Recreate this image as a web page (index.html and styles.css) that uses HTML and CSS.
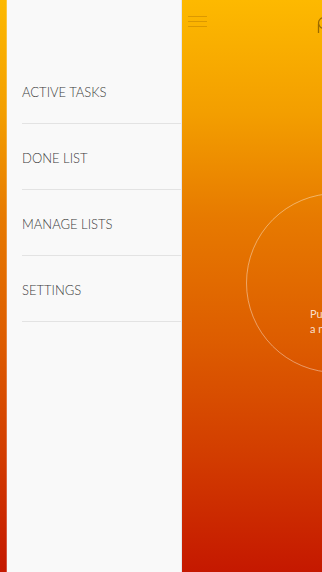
FILE: index.html
```html
<!DOCTYPE html>
<html lang="en">
  <head>
    <meta charset="UTF-8">
    <title>Tasks</title>
    <link rel="stylesheet" href="styles.css">
  </head>
  <body>
    <div class="edge"></div>
    <nav class="drawer">
      <ul class="menu">
        <li class="menu-item">ACTIVE TASKS</li>
        <li class="menu-item">DONE LIST</li>
        <li class="menu-item">MANAGE LISTS</li>
        <li class="menu-item">SETTINGS</li>
      </ul>
    </nav>
    <main class="main">
      <header class="topbar">
        <div class="burger">
          <span></span>
          <span></span>
          <span></span>
        </div>
        <svg class="search" width="14" height="20" viewBox="0 0 14 20">
          <circle cx="10" cy="7" r="5.5" fill="none" stroke="#9a6a00" stroke-width="1.3"/>
          <line x1="4.5" y1="8" x2="4.5" y2="17" stroke="#9a6a00" stroke-width="1.3"/>
        </svg>
      </header>
      <div class="circle">
        <p class="hint">Pull down to add<br>a new task</p>
      </div>
    </main>
  </body>
</html>
```

FILE: styles.css
```css
html, body {
  height: 100%;
}

body {
  margin: 0;
  display: flex;
  overflow: hidden;
  font-family: "Lato", "Liberation Sans", sans-serif;
  background: linear-gradient(to bottom, #fdb900 0%, #f39e00 20%, #e77a00 38%, #dd5c00 60%, #d23c00 80%, #c51800 100%);
}

.edge {
  width: 6px;
  flex-shrink: 0;
  border-right: 1px solid rgba(255, 255, 255, 0.25);
}

.drawer {
  width: 174px;
  flex-shrink: 0;
  background-color: #f9f9f9;
  border-right: 1px solid #e4e8ee;
}

.menu {
  list-style: none;
  margin: 58px 0 0 0;
  padding: 0 0 0 15px;
}

.menu-item {
  height: 66px;
  box-sizing: border-box;
  display: flex;
  align-items: center;
  padding-top: 2px;
  border-bottom: 1px solid #e3e3e3;
  font-size: 13px;
  font-weight: 300;
  color: #3c3c3c;
}

.main {
  flex: 1;
  min-width: 0;
  display: flex;
  flex-direction: column;
}

.topbar {
  height: 40px;
  display: flex;
  align-items: flex-start;
  justify-content: space-between;
  padding: 16px 0 0 6px;
  box-sizing: border-box;
}

.burger {
  width: 19px;
  display: flex;
  flex-direction: column;
  gap: 4px;
}

.burger span {
  height: 1px;
  background-color: rgba(160, 100, 0, 0.35);
}

.search {
  margin-right: -6px;
}

.circle {
  width: 180px;
  height: 180px;
  flex-shrink: 0;
  margin: 153px 0 0 64px;
  border: 1px solid rgba(255, 255, 255, 0.4);
  border-radius: 50%;
  box-sizing: border-box;
  padding: 112px 0 0 63px;
}

.hint {
  margin: 0;
  width: 120px;
  font-size: 11px;
  line-height: 15px;
  color: rgba(255, 255, 255, 0.8);
}
```
